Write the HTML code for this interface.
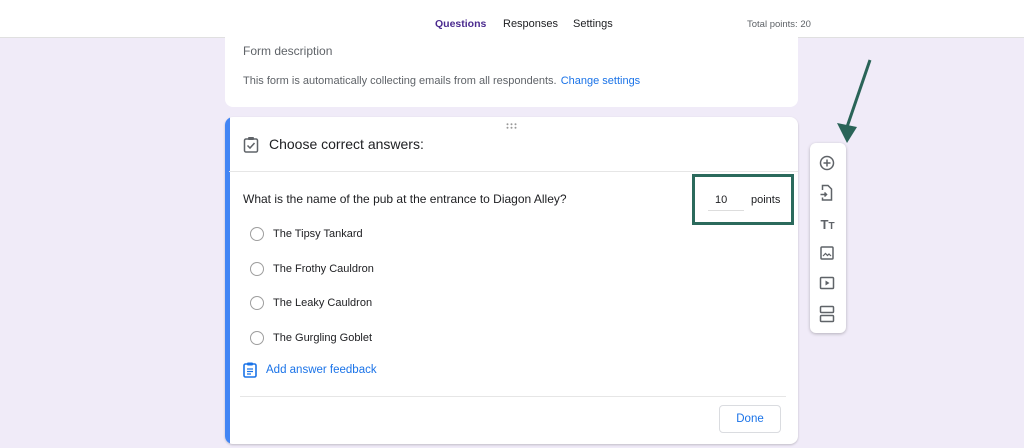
<!DOCTYPE html>
<html><head><style>
*{margin:0;padding:0;box-sizing:border-box}
body{width:1024px;height:448px;overflow:hidden;background:#f0ebf8;font-family:"Liberation Sans",sans-serif;position:relative}
.abs{position:absolute}
.top{left:0;top:0;width:1024px;height:38px;background:#fff;border-bottom:1px solid #e0e0e0}
.tab{top:18px;font-size:11px;color:#202124}
.card{background:#fff;border-radius:8px;left:225px;width:573px}
.t{white-space:nowrap}
.radio{width:14px;height:14px;border:1.5px solid #9e9e9e;border-radius:50%;left:250px}
.opt{left:273px;font-size:11px;color:#202124}
</style></head><body>
<div class="abs top"></div>
<div class="abs tab t" style="left:435px;color:#4b2b8f;font-weight:bold;font-size:10.5px">Questions</div>
<div class="abs" style="left:427px;top:35px;width:64px;height:3px;background:#673ab7;border-radius:2px 2px 0 0"></div>
<div class="abs tab t" style="left:503px">Responses</div>
<div class="abs tab t" style="left:573px">Settings</div>
<div class="abs t" style="left:747px;top:19px;font-size:9.5px;color:#5f6368">Total points: 20</div>

<div class="abs card" style="top:30px;height:77px;border-radius:0 0 8px 8px"></div>
<div class="abs t" style="left:243px;top:44px;font-size:12px;color:#5f6368">Form description</div>
<div class="abs t" style="left:243px;top:75px;font-size:11px;color:#5f6368">This form is automatically collecting emails from all respondents. <span style="color:#1a73e8;margin-left:1px">Change settings</span></div>

<div class="abs card" style="top:117px;height:327px;overflow:hidden;box-shadow:0 1px 2px rgba(0,0,0,.2)">
 <div class="abs" style="left:0;top:0;width:5px;height:327px;background:#4285f4"></div>
</div>
<svg class="abs" style="left:506px;top:123px" width="12" height="6"><g fill="#999"><circle cx="1.5" cy="1.2" r="1"/><circle cx="5.5" cy="1.2" r="1"/><circle cx="9.5" cy="1.2" r="1"/><circle cx="1.5" cy="4.8" r="1"/><circle cx="5.5" cy="4.8" r="1"/><circle cx="9.5" cy="4.8" r="1"/></g></svg>
<svg class="abs" style="left:243px;top:136px" width="16" height="17" viewBox="0 0 16 17"><rect x="1.5" y="3" width="13" height="13" rx="1.5" fill="none" stroke="#5f6368" stroke-width="1.5"/><rect x="5" y="1" width="6" height="3" rx="1" fill="#5f6368"/><path d="M4.5 9.5l2.5 2.5 4.5-5" fill="none" stroke="#5f6368" stroke-width="1.5"/></svg>
<div class="abs t" style="left:269px;top:136px;font-size:14px;color:#202124">Choose correct answers:</div>
<div class="abs" style="left:229px;top:171px;width:569px;height:1px;background:#e6e6e6"></div>
<div class="abs t" style="left:243px;top:192px;font-size:12px;color:#202124">What is the name of the pub at the entrance to Diagon Alley?</div>
<div class="abs" style="left:692px;top:174px;width:102px;height:51px;border:3px solid #2b6a5c"></div>
<div class="abs t" style="left:715px;top:194px;font-size:11px;color:#202124">10</div>
<div class="abs" style="left:708px;top:210px;width:36px;height:1px;background:#ddd"></div>
<div class="abs t" style="left:751px;top:194px;font-size:11px;color:#202124">points</div>

<div class="abs radio" style="top:227px"></div><div class="abs opt t" style="top:228px">The Tipsy Tankard</div>
<div class="abs radio" style="top:262px"></div><div class="abs opt t" style="top:263px">The Frothy Cauldron</div>
<div class="abs radio" style="top:296px"></div><div class="abs opt t" style="top:297px">The Leaky Cauldron</div>
<div class="abs radio" style="top:331px"></div><div class="abs opt t" style="top:332px">The Gurgling Goblet</div>

<svg class="abs" style="left:243px;top:362px" width="14" height="16" viewBox="0 0 14 16"><rect x="1" y="2" width="12" height="13" rx="1.5" fill="none" stroke="#1a73e8" stroke-width="1.6"/><rect x="4" y="0.5" width="6" height="3" rx="1" fill="#1a73e8"/><path d="M4 7h6M4 9.5h6M4 12h4" stroke="#1a73e8" stroke-width="1.3"/></svg>
<div class="abs t" style="left:266px;top:364px;font-size:11.5px;color:#1a73e8">Add answer feedback</div>
<div class="abs" style="left:240px;top:396px;width:546px;height:1px;background:#e6e6e6"></div>
<div class="abs" style="left:719px;top:405px;width:62px;height:28px;border:1px solid #dadce0;border-radius:4px;color:#1a73e8;font-size:11.5px;text-align:center;line-height:26px">Done</div>

<div class="abs" style="left:810px;top:143px;width:36px;height:190px;background:#fff;border-radius:6px;box-shadow:0 1px 3px rgba(0,0,0,.25)"></div>
<svg class="abs" style="left:810px;top:143px" width="36" height="190" viewBox="0 0 36 190" fill="none" stroke="#5f6368" stroke-width="1.5">
<circle cx="17" cy="20" r="6.5"/><path d="M17 16.5v7M13.5 20h7"/>
<path d="M12.5 47v-4.5h5.5l3.5 3.5v11h-9v-2.5"/>
<path d="M10.5 51.5h6M14.5 49.5l2 2-2 2"/>
<text x="10.5" y="86" font-family="Liberation Sans" font-weight="bold" font-size="13" fill="#5f6368" stroke="none">T</text><text x="18.5" y="86" font-family="Liberation Sans" font-weight="bold" font-size="10" fill="#5f6368" stroke="none">T</text>
<rect x="11" y="104" width="12" height="12" rx="1"/><path d="M13 113l2.5-2.5 2 2 1.5-1.5 2 2" stroke-width="1.2"/>
<rect x="10.5" y="134.5" width="13" height="11" rx="1"/><path d="M15.5 137.5v5l4-2.5z" fill="#5f6368" stroke="none"/>
<rect x="10.5" y="163.5" width="13" height="6" rx="1"/><rect x="10.5" y="172.5" width="13" height="6" rx="1"/>
</svg>
<svg class="abs" style="left:825px;top:55px" width="55" height="100" viewBox="0 0 55 100"><path d="M45 5L22 72" stroke="#2a6458" stroke-width="3"/><path d="M12 68l10 20 10-16z" fill="#2a6458"/></svg>
</body></html>
